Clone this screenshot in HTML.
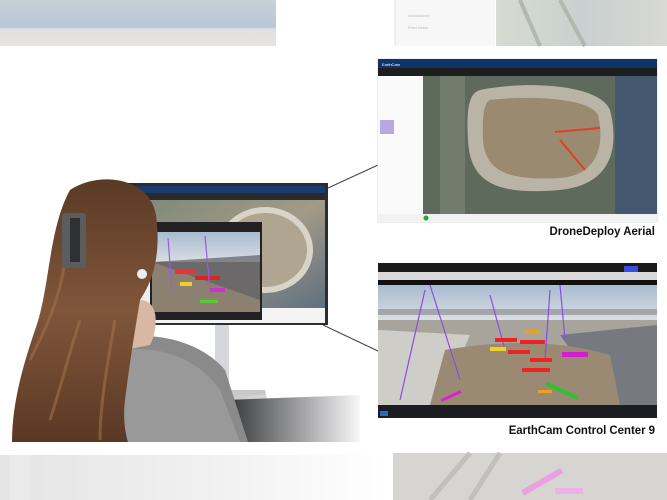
<!DOCTYPE html>
<html><head><meta charset="utf-8"><style>
html,body{margin:0;padding:0;background:#fff;width:667px;height:500px;overflow:hidden;font-family:"Liberation Sans",sans-serif}
.lbl{position:absolute;font-size:12px;color:#111;font-weight:bold;letter-spacing:0px;transform:scaleX(0.95);transform-origin:right}
</style></head><body>
<svg width="667" height="500" style="position:absolute;left:0;top:0" xmlns="http://www.w3.org/2000/svg">
<defs>
<linearGradient id="topL" x1="0" y1="0" x2="0" y2="1"><stop offset="0" stop-color="#c8d0d8"/><stop offset="0.6" stop-color="#b9c7d6"/><stop offset="0.62" stop-color="#dfe0e0"/><stop offset="1" stop-color="#e6e4e0"/></linearGradient>
<linearGradient id="map" x1="0" y1="0" x2="1" y2="0"><stop offset="0" stop-color="#d6dcd2"/><stop offset="0.5" stop-color="#c9d0cf"/><stop offset="1" stop-color="#d8d8d4"/></linearGradient>
<linearGradient id="aer" x1="0" y1="0" x2="1" y2="1"><stop offset="0" stop-color="#7c8878"/><stop offset="0.5" stop-color="#a39a88"/><stop offset="1" stop-color="#5f7080"/></linearGradient>
<linearGradient id="sky" x1="0" y1="0" x2="0" y2="1"><stop offset="0" stop-color="#a9bbd0"/><stop offset="1" stop-color="#d8dde2"/></linearGradient>
<linearGradient id="hair" x1="0" y1="0" x2="0" y2="1"><stop offset="0" stop-color="#5a3a26"/><stop offset="0.5" stop-color="#80563a"/><stop offset="1" stop-color="#5a3824"/></linearGradient>
<linearGradient id="fadeR" x1="0" y1="0" x2="1" y2="0"><stop offset="0" stop-color="#fff" stop-opacity="0"/><stop offset="1" stop-color="#fff" stop-opacity="1"/></linearGradient>
<linearGradient id="botL" x1="0" y1="0" x2="1" y2="0"><stop offset="0" stop-color="#e4e4e4"/><stop offset="0.6" stop-color="#f2f2f2"/><stop offset="1" stop-color="#fff"/></linearGradient>
</defs>
<rect x="0" y="0" width="276" height="46" fill="url(#topL)"/>
<rect x="395" y="0" width="100" height="46" fill="#f7f7f7"/>
<line x1="395" y1="0" x2="395" y2="46" stroke="#e0e0e0"/>
<text x="408" y="17" font-size="4" fill="#bbb" font-family="Liberation Sans">Annotations</text>
<text x="408" y="29" font-size="4" fill="#bbb" font-family="Liberation Sans">Field Notes</text>
<rect x="496" y="0" width="171" height="46" fill="url(#map)"/>
<path d="M520 0 L540 46 M560 0 L585 46" stroke="#b0b8b0" stroke-width="4"/>
<rect x="0" y="455" width="390" height="45" fill="url(#botL)"/>
<rect x="10" y="455" width="20" height="45" fill="#eaeaea"/>
<rect x="393" y="453" width="274" height="47" fill="#d7d5d1"/>
<path d="M470 453 L430 500 M500 453 L470 500" stroke="#c2c0bc" stroke-width="5"/>
<rect x="520" y="480" width="45" height="6" fill="#e8a0e0" transform="rotate(-30 540 483)"/>
<rect x="555" y="488" width="28" height="6" fill="#eeb0e8"/>
<line x1="328" y1="188" x2="378" y2="165" stroke="#444" stroke-width="1"/>
<line x1="323" y1="325" x2="378" y2="351" stroke="#444" stroke-width="1"/>
<rect x="215" y="325" width="14" height="70" fill="#d5d7da"/>
<path d="M200 390 L265 390 L270 412 L210 412Z" fill="#c8c8ca"/>
<path d="M225 400 L360 395 L360 442 L235 442Z" fill="#3a3b3e"/>
<rect x="230" y="395" width="135" height="48" fill="url(#fadeR)"/>
<rect x="128" y="183" width="200" height="142" fill="#2a2d33"/>
<rect x="131" y="186" width="194" height="7" fill="#1a3c6e"/>
<rect x="131" y="193" width="194" height="7" fill="#2a2a2a"/>
<rect x="131" y="200" width="194" height="108" fill="url(#aer)"/>
<rect x="131" y="200" width="20" height="108" fill="#eee"/>
<ellipse cx="265" cy="250" rx="45" ry="40" fill="#b0a590" stroke="#d8d4c8" stroke-width="6"/>
<rect x="131" y="308" width="194" height="15" fill="#f4f4f4"/>
<rect x="150" y="222" width="112" height="98" fill="#222"/>
<rect x="152" y="232" width="108" height="30" fill="url(#sky)"/>
<rect x="152" y="262" width="108" height="50" fill="#8c8070"/>
<path d="M152 262 L260 255 L260 300 Z" fill="#5c6068" opacity="0.7"/>
<rect x="175" y="270" width="20" height="4" fill="#e33"/><rect x="195" y="276" width="25" height="4" fill="#d22"/><rect x="180" y="282" width="12" height="4" fill="#ec3"/><rect x="210" y="288" width="15" height="4" fill="#c3c"/><rect x="200" y="300" width="18" height="3" fill="#5c3"/>
<path d="M168 238 L172 290 M205 236 L210 290" stroke="#9a5ae0" stroke-width="1.2"/>
<path d="M120 340 C150 330 200 340 225 370 L248 442 L95 442 Z" fill="#8a8a8a"/>
<path d="M125 350 C160 345 200 360 220 390 L240 442 L120 442Z" fill="#999"/>
<path d="M140 300 C160 300 158 330 150 345 L125 350 Z" fill="#d8b8a4"/>
<path d="M70 190 C100 170 150 178 156 215 C162 260 150 285 140 300 C135 330 130 360 125 400 C122 425 128 442 128 442 L12 442 C12 400 25 360 35 330 C50 290 48 230 70 190Z" fill="url(#hair)"/>
<path d="M30 360 C45 330 60 300 65 260 M50 420 C60 390 70 350 80 320 M100 440 C100 400 110 350 115 320" stroke="#a0704a" stroke-width="3" fill="none" opacity="0.6"/>
<rect x="62" y="213" width="24" height="55" rx="3" fill="#5a5c5e"/>
<rect x="70" y="218" width="10" height="44" fill="#2e3032"/>
<circle cx="142" cy="274" r="5" fill="#eee"/>
<rect x="378" y="59" width="279" height="163" fill="#fff" stroke="#ddd"/>
<rect x="378" y="59" width="279" height="9" fill="#0e3566"/>
<text x="382" y="66" font-size="4" fill="#fff" font-family="Liberation Sans">EarthCam</text>
<rect x="378" y="68" width="279" height="8" fill="#1e1e1e"/>
<rect x="378" y="76" width="45" height="138" fill="#fafafa"/>
<rect x="380" y="120" width="14" height="14" fill="#b8a8e0"/>
<rect x="423" y="76" width="234" height="138" fill="#5e6a5c"/>
<rect x="440" y="76" width="25" height="138" fill="#727c6c"/>
<path d="M480 90 C530 80 600 85 610 110 C620 150 610 185 560 190 C500 195 470 185 468 140 C466 105 470 93 480 90Z" fill="#b9b4a6"/>
<path d="M490 100 C530 95 590 98 598 115 C605 145 598 175 560 178 C510 181 485 172 483 140 C482 115 484 103 490 100Z" fill="#9a8a70"/>
<path d="M555 132 L600 128 M560 140 L585 170" stroke="#e04020" stroke-width="2"/>
<rect x="615" y="76" width="42" height="138" fill="#44596f"/>
<rect x="378" y="214" width="279" height="8" fill="#f2f2f2"/>
<circle cx="426" cy="218" r="2.5" fill="#2a3"/>
<rect x="378" y="263" width="279" height="155" fill="#1a1a1a"/>
<rect x="624" y="266" width="14" height="6" fill="#3b4ee0"/>
<rect x="378" y="272" width="279" height="8" fill="#d8d8d8"/>
<rect x="378" y="280" width="279" height="5" fill="#111"/>
<rect x="378" y="285" width="279" height="35" fill="url(#sky)"/>
<rect x="378" y="320" width="279" height="85" fill="#a8a49c"/>
<path d="M378 330 L470 335 L440 405 L378 405Z" fill="#cfcdc8"/>
<path d="M657 325 L560 335 L610 405 L657 405Z" fill="#767a80"/>
<path d="M445 350 C500 340 560 340 610 355 L620 405 L430 405Z" fill="#9a8a74"/>
<rect x="378" y="309" width="279" height="6" fill="#777" opacity="0.5"/>
<g stroke="#8a4be8" stroke-width="1.2" fill="none"><path d="M430 285 L460 380 M490 295 L505 350 M550 290 L545 360 M560 285 L565 340 M425 290 L400 400"/></g>
<rect x="525" y="330" width="14" height="4" fill="#e8a020"/>
<rect x="495" y="338" width="22" height="4" fill="#e22"/><rect x="520" y="340" width="25" height="4" fill="#e22"/>
<rect x="490" y="347" width="16" height="4" fill="#f0d020"/><rect x="508" y="350" width="22" height="4" fill="#e22"/><rect x="562" y="352" width="26" height="5" fill="#d020d0"/>
<rect x="530" y="358" width="22" height="4" fill="#e22"/><rect x="522" y="368" width="28" height="4" fill="#e22"/>
<rect x="545" y="388" width="34" height="4" fill="#30c030" transform="rotate(25 560 390)"/>
<rect x="538" y="390" width="14" height="3" fill="#f0a020"/>
<rect x="440" y="395" width="22" height="3" fill="#e020d0" transform="rotate(-25 450 396)"/>
<rect x="378" y="405" width="279" height="13" fill="#1b1d22"/>
<rect x="380" y="411" width="8" height="5" fill="#2a68c8"/>
</svg>
<div class="lbl" style="right:12px;top:224px">DroneDeploy Aerial</div>
<div class="lbl" style="right:12px;top:423px">EarthCam Control Center 9</div>
</body></html>
